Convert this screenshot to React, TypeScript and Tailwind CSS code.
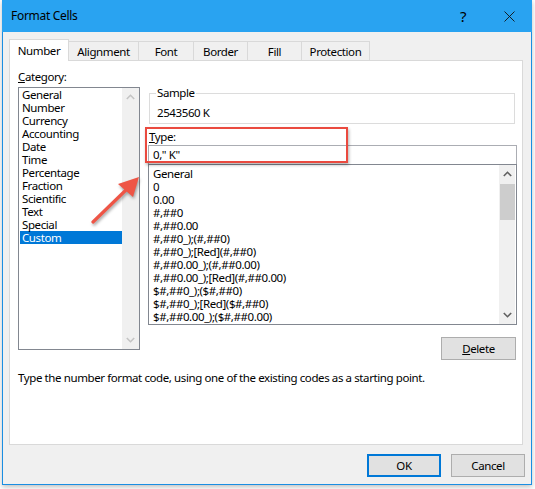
import { ReactNode } from "react";

const categories = [
  "General",
  "Number",
  "Currency",
  "Accounting",
  "Date",
  "Time",
  "Percentage",
  "Fraction",
  "Scientific",
  "Text",
  "Special",
  "Custom",
];

const codes = [
  "General",
  "0",
  "0.00",
  "#,##0",
  "#,##0.00",
  "#,##0_);(#,##0)",
  "#,##0_);[Red](#,##0)",
  "#,##0.00_);(#,##0.00)",
  "#,##0.00_);[Red](#,##0.00)",
  "$#,##0_);($#,##0)",
  "$#,##0_);[Red]($#,##0)",
  "$#,##0.00_);($#,##0.00)",
];

const tabs = [
  { label: "Alignment", width: "w-[70px]" },
  { label: "Font", width: "w-[55px]" },
  { label: "Border", width: "w-[54px]" },
  { label: "Fill", width: "w-[54px]" },
  { label: "Protection", width: "w-[68px]" },
];

const Chevron = ({ up, color }: { up?: boolean; color: string }) => (
  <svg width="9" height="6" viewBox="0 0 9 6">
    <polyline
      points={up ? "0.8,5 4.5,1.3 8.2,5" : "0.8,1 4.5,4.7 8.2,1"}
      fill="none"
      stroke={color}
      strokeWidth="1.6"
    />
  </svg>
);

const Btn = ({
  children,
  primary,
  className,
}: {
  children: ReactNode;
  primary?: boolean;
  className?: string;
}) => (
  <div
    className={`flex h-[23px] w-[74px] items-center justify-center bg-[#e1e1e1] ${
      primary ? "border-2 border-[#0078d7]" : "border border-[#adadad]"
    } ${className ?? ""}`}
  >
    {children}
  </div>
);

export default function App() {
  return (
    <div className="relative h-[489px] w-[535px] overflow-hidden bg-white font-['Segoe_UI','Noto_Sans',sans-serif] text-[11.5px] leading-[16px] tracking-[-0.4px] text-black">
      <div className="ml-[2px] flex h-[485px] w-[530px] flex-col border-x border-b border-[#1a8ee2] bg-[#f0f0f0] shadow-[0_2px_5px_rgba(0,0,0,0.25)]">
        {/* title bar */}
        <div className="-mx-px flex h-[32px] items-center bg-[#29a3f1] pl-[9px]">
          <span className="text-[12px] tracking-[-0.3px]">Format Cells</span>
          <div className="ml-auto flex h-full">
            <div className="flex w-[46px] items-center justify-center text-[15px]">?</div>
            <div className="flex w-[46px] items-center justify-center">
              <svg width="11" height="11" viewBox="0 0 11 11">
                <path d="M0.5 0.5 L10.5 10.5 M10.5 0.5 L0.5 10.5" stroke="#111" strokeWidth="0.9" />
              </svg>
            </div>
          </div>
        </div>

        {/* tabs */}
        <div className="ml-[6px] mt-[7px] flex h-[22px] items-end">
          <div className="relative z-10 flex h-[22px] w-[60px] items-center justify-center border-x border-t border-[#d9d9d9] bg-white pt-[1px]">
            Number
          </div>
          {tabs.map((t) => (
            <div
              key={t.label}
              className={`flex h-[20px] items-center justify-center border-r border-t border-[#d9d9d9] bg-[#f0f0f0] pt-[1px] ${t.width}`}
            >
              {t.label}
            </div>
          ))}
        </div>

        {/* panel */}
        <div className="-mt-px ml-[6px] h-[385px] w-[514px] border border-[#d9d9d9] bg-white pl-[8px]">
          <div className="flex gap-[8px]">
            {/* category column */}
            <div className="flex w-[122px] flex-col">
              <div className="mt-[8px]">
                <span className="underline">C</span>ategory:
              </div>
              <div className="mt-[2px] flex h-[263px] border border-[#828790]">
                <div className="flex-1 pl-[1px]">
                  {categories.map((c) => (
                    <div
                      key={c}
                      className={`h-[13px] pl-[2px] leading-[13px] ${
                        c === "Custom" ? "bg-[#0078d7] text-white" : ""
                      }`}
                    >
                      {c}
                    </div>
                  ))}
                </div>
                <div className="flex w-[17px] flex-col items-center justify-between bg-[#f0f0f0] py-[6px]">
                  <Chevron up color="#c4c4c4" />
                  <Chevron color="#c4c4c4" />
                </div>
              </div>
            </div>

            {/* type column */}
            <div className="flex w-[369px] flex-col">
              <fieldset className="ml-px mr-[2px] mt-[24px] h-[39px] border border-[#dcdcdc] px-[6px]">
                <legend className="px-[1px]">Sample</legend>
                <div className="ml-[1px] mt-[4px]">2543560 K</div>
              </fieldset>
              <div className="ml-px mt-[5px]">
                <span className="underline">T</span>ype:
              </div>
              <div className="flex h-[19px] items-center border-x border-t border-[#abadb3] pl-[4px]">
                0," K"
              </div>
              <div className="flex h-[161px] border border-[#828790]">
                <div className="flex-1 pl-[4px] pt-[2px]">
                  {codes.map((c) => (
                    <div key={c} className="h-[13px] leading-[13px]">
                      {c}
                    </div>
                  ))}
                </div>
                <div className="mr-px flex w-[16px] flex-col items-center bg-[#f0f0f0]">
                  <div className="flex h-[18px] items-center">
                    <Chevron up color="#606060" />
                  </div>
                  <div className="mt-px h-[36px] w-[15px] bg-[#cdcdcd]" />
                  <div className="mt-auto flex h-[18px] items-center">
                    <Chevron color="#606060" />
                  </div>
                </div>
              </div>
              <Btn className="ml-auto mr-px mt-[12px] w-[75px]">
                <span>
                  <span className="underline">D</span>elete
                </span>
              </Btn>
            </div>
          </div>
          <div className="mt-[10px]">
            Type the number format code, using one of the existing codes as a starting point.
          </div>
        </div>

        {/* dialog buttons */}
        <div className="mt-[9px] flex justify-end gap-[10px] pr-[6px]">
          <Btn primary>OK</Btn>
          <Btn>Cancel</Btn>
        </div>
      </div>

      {/* callout: box around Type field and pointer arrow */}
      <div className="absolute left-[145px] top-[127px] h-[36px] w-[203px] border-2 border-[#ea4a3f] shadow-[1px_2px_3px_rgba(0,0,0,0.3)]" />
      <svg
        className="absolute left-0 top-0 drop-shadow-[1px_2px_1.5px_rgba(0,0,0,0.35)]"
        width="535"
        height="489"
        viewBox="0 0 535 489"
      >
        <line x1="93" y1="222" x2="127" y2="189" stroke="#ee5546" strokeWidth="3.2" strokeLinecap="round" />
        <polygon points="139,177 133,197 118,184" fill="#ee5546" />
      </svg>
    </div>
  );
}
